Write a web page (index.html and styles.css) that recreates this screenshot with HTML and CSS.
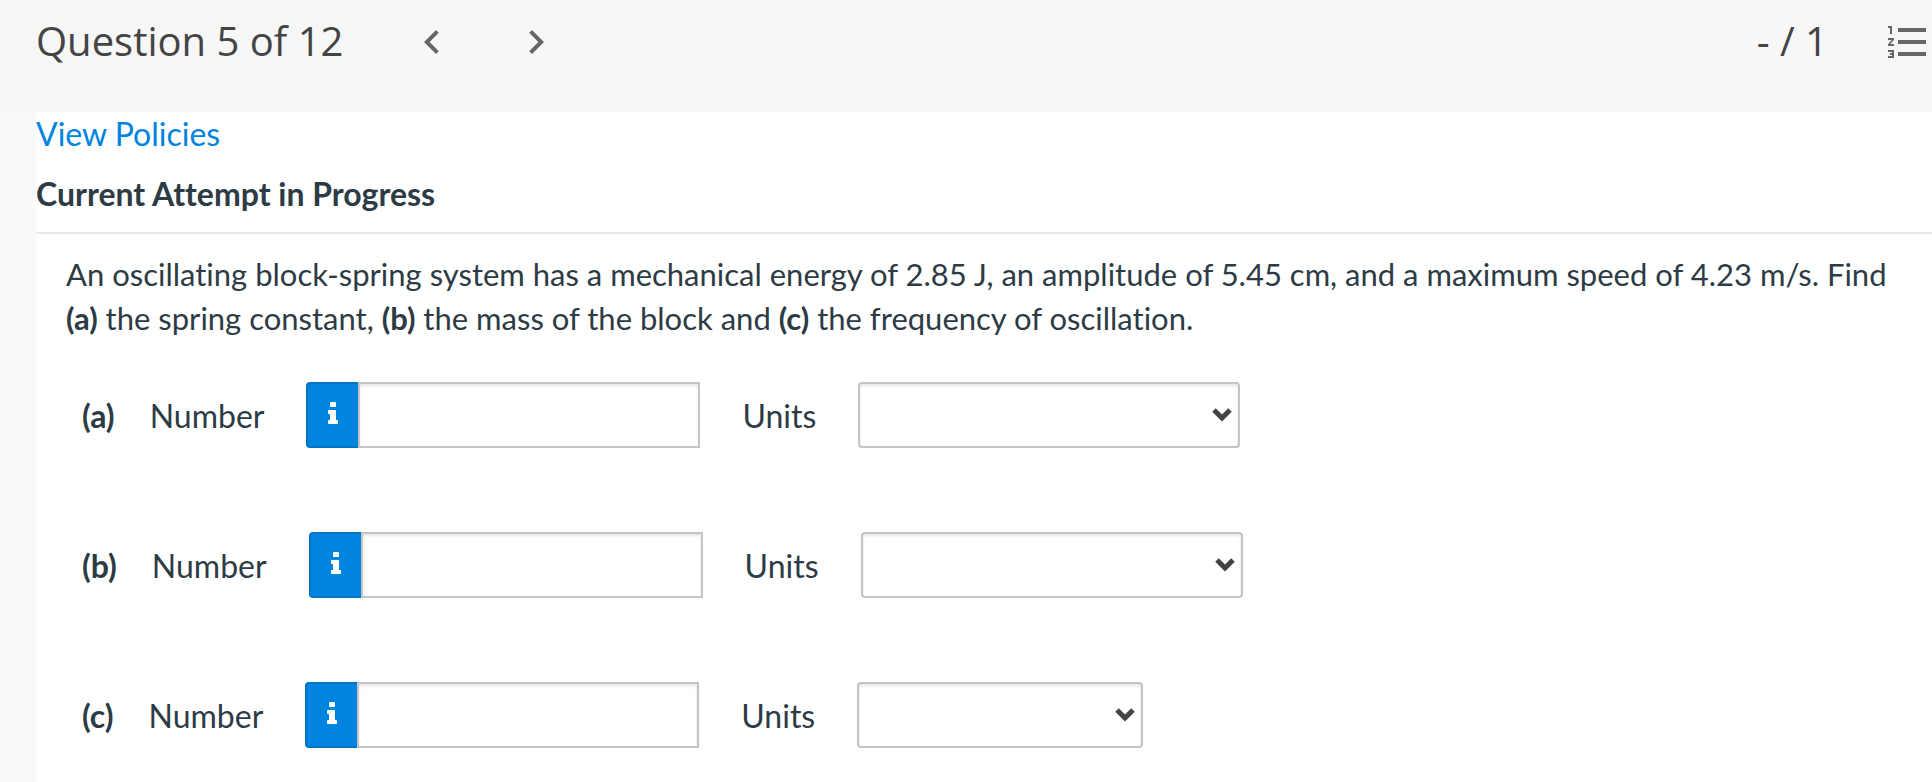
FILE: index.html
```html
<!DOCTYPE html>
<html lang="en">
<head>
  <meta charset="UTF-8">
  <meta name="viewport" content="width=device-width, initial-scale=1.0">
  <title>Question 5 of 12</title>
  <link rel="stylesheet" href="styles.css">
</head>
<body>
  <header class="topbar">
    <h1 class="topbar-title">Question 5 of 12</h1>
    <nav class="topbar-nav">
      <button class="icon-button" type="button" aria-label="Previous question">
        <svg viewBox="0 0 24 24"><path d="M15.41 7.41L14 6l-6 6 6 6 1.41-1.41L10.83 12z"/></svg>
      </button>
      <button class="icon-button" type="button" aria-label="Next question">
        <svg viewBox="0 0 24 24"><path d="M10 6L8.59 7.41 13.17 12l-4.58 4.59L10 18l6-6z"/></svg>
      </button>
    </nav>
    <div class="score">- / 1</div>
    <button class="icon-button" type="button" aria-label="Question list">
      <svg viewBox="0 0 24 24"><path d="M2 17h2v.5H3v1h1v.5H2v1h3v-4H2v1zm1-9h1V4H2v1h1v3zm-1 3h1.8L2 13.1v.9h3v-1H3.2L5 10.9V10H2v1zm5-6v2h14V5H7zm0 14h14v-2H7v2zm0-6h14v-2H7v2z"/></svg>
    </button>
  </header>

  <main class="content">
    <a class="policies" href="#">View Policies</a>
    <h2 class="attempt">Current Attempt in Progress</h2>

    <form class="question">
      <p class="question-text">An oscillating block-spring system has a mechanical energy of 2.85 J, an amplitude of 5.45 cm, and a maximum speed of 4.23 m/s. Find <b>(a)</b> the spring constant, <b>(b)</b> the mass of the block and <b>(c)</b> the frequency of oscillation.</p>

      <div class="answers">
        <!-- (a) -->
        <div class="answer">
          <b class="part">(a)</b>
          <label class="number-label" for="number-a">Number</label>
          <div class="number-group">
            <button class="info" type="button" aria-label="Input help">
              <svg viewBox="0 128 640 1408"><path d="M640 1344v128q0 26-19 45t-45 19H64q-26 0-45-19t-19-45v-128q0-26 19-45t45-19h64V896H64q-26 0-45-19t-19-45V704q0-26 19-45t45-19h384q26 0 45 19t19 45v576h64q26 0 45 19t19 45zM512 192v192q0 26-19 45t-45 19H192q-26 0-45-19t-19-45V192q0-26 19-45t45-19h256q26 0 45 19t19 45z"/></svg>
            </button>
            <input class="number" id="number-a" type="text">
          </div>
          <label class="units-label" for="units-a">Units</label>
          <div class="select-wrap">
            <select class="units" id="units-a"><option></option></select>
            <svg class="arrow" viewBox="0 0 20 14"><path d="M2 2l8 8 8-8"/></svg>
          </div>
        </div>
        <!-- (b) -->
        <div class="answer">
          <b class="part">(b)</b>
          <label class="number-label" for="number-b">Number</label>
          <div class="number-group">
            <button class="info" type="button" aria-label="Input help">
              <svg viewBox="0 128 640 1408"><path d="M640 1344v128q0 26-19 45t-45 19H64q-26 0-45-19t-19-45v-128q0-26 19-45t45-19h64V896H64q-26 0-45-19t-19-45V704q0-26 19-45t45-19h384q26 0 45 19t19 45v576h64q26 0 45 19t19 45zM512 192v192q0 26-19 45t-45 19H192q-26 0-45-19t-19-45V192q0-26 19-45t45-19h256q26 0 45 19t19 45z"/></svg>
            </button>
            <input class="number" id="number-b" type="text">
          </div>
          <label class="units-label" for="units-b">Units</label>
          <div class="select-wrap">
            <select class="units" id="units-b"><option></option></select>
            <svg class="arrow" viewBox="0 0 20 14"><path d="M2 2l8 8 8-8"/></svg>
          </div>
        </div>
        <!-- (c) -->
        <div class="answer">
          <b class="part">(c)</b>
          <label class="number-label" for="number-c">Number</label>
          <div class="number-group">
            <button class="info" type="button" aria-label="Input help">
              <svg viewBox="0 128 640 1408"><path d="M640 1344v128q0 26-19 45t-45 19H64q-26 0-45-19t-19-45v-128q0-26 19-45t45-19h64V896H64q-26 0-45-19t-19-45V704q0-26 19-45t45-19h384q26 0 45 19t19 45v576h64q26 0 45 19t19 45zM512 192v192q0 26-19 45t-45 19H192q-26 0-45-19t-19-45V192q0-26 19-45t45-19h256q26 0 45 19t19 45z"/></svg>
            </button>
            <input class="number" id="number-c" type="text">
          </div>
          <label class="units-label" for="units-c">Units</label>
          <div class="select-wrap">
            <select class="units units-short" id="units-c"><option></option></select>
            <svg class="arrow" viewBox="0 0 20 14"><path d="M2 2l8 8 8-8"/></svg>
          </div>
        </div>
      </div>
    </form>
  </main>
</body>
</html>
```
FILE: styles.css
```css
* {
  box-sizing: border-box;
}
body {
  display: flex;
  flex-direction: column;
  min-height: 100vh;
  margin: 0;
  background-color: #f9f9f9;
  color: #2d3b45;
  font-family: Lato, sans-serif;
  font-size: 32px;
  font-variant-ligatures: none;
  line-height: 44px;
}

/* header */
.topbar {
  display: flex;
  align-items: center;
  padding: 14px 0 42px 36px;
  background-color: #f7f7f7;
  color: #444;
  font-family: "Open Sans", sans-serif;
  font-size: 40px;
  line-height: 54px;
}
.topbar-title {
  margin: 0 65px 0 0;
  padding-bottom: 2px;
  font-size: 40px;
  font-weight: normal;
}
.topbar-nav {
  display: flex;
  gap: 56px;
}
.icon-button {
  width: 48px;
  height: 48px;
  padding: 0;
  border: 0;
  background: none;
  cursor: pointer;
}
.icon-button svg {
  display: block;
  fill: #666;
}
.score {
  margin: 0 56px 0 auto;
  padding-bottom: 2px;
}

/* question */
.content {
  flex: 1;
  margin-left: 36px;
  background-color: #fff;
}
.policies {
  display: block;
  color: #0084e0;
  text-decoration: none;
}
.attempt {
  margin: 0;
  padding: 16px 0;
  border-bottom: 2px solid #e8e8e8;
  font-size: 32px;
  font-weight: bold;
}
.question {
  padding: 18px 24px 0 30px;
}
.question-text {
  margin: 0 0 42px;
  font-size: 31px;
}
.answers {
  display: flex;
  flex-direction: column;
  gap: 84px;
  padding-left: 16px;
}
.answer {
  display: flex;
  align-items: center;
}
.part,
.number-label,
.units-label {
  padding-top: 2px;
}
.number-label {
  margin: 0 42px 0 35px;
}
.number-group {
  display: flex;
}
.info {
  display: flex;
  justify-content: center;
  width: 52px;
  height: 66px;
  padding: 18px 0 0;
  border: 2px solid #0074c4;
  border-right: 0;
  border-radius: 4px 0 0 4px;
  background-color: #0084e0;
}
.info svg {
  width: 10px;
  height: 22px;
  fill: #fff;
}
.number {
  width: 342px;
  height: 66px;
  padding: 0 16px;
  border: 2px solid #c4c4c4;
  border-radius: 0;
  box-shadow: inset 0 2px 3px rgba(0, 0, 0, 0.1);
  font: inherit;
}
.units-label {
  margin: 0 42px;
}
.select-wrap {
  position: relative;
}
.units {
  display: block;
  width: 382px;
  height: 66px;
  padding: 0 36px 0 12px;
  border: 2px solid #c4c4c4;
  border-radius: 4px;
  background-color: #fff;
  box-shadow: inset 0 2px 3px rgba(0, 0, 0, 0.1);
  font: inherit;
  appearance: none;
}
.units-short {
  width: 286px;
}
.arrow {
  position: absolute;
  top: 26px;
  right: 8px;
  width: 20px;
  height: 14px;
  fill: none;
  stroke: #444;
  stroke-width: 5;
  pointer-events: none;
}
```
